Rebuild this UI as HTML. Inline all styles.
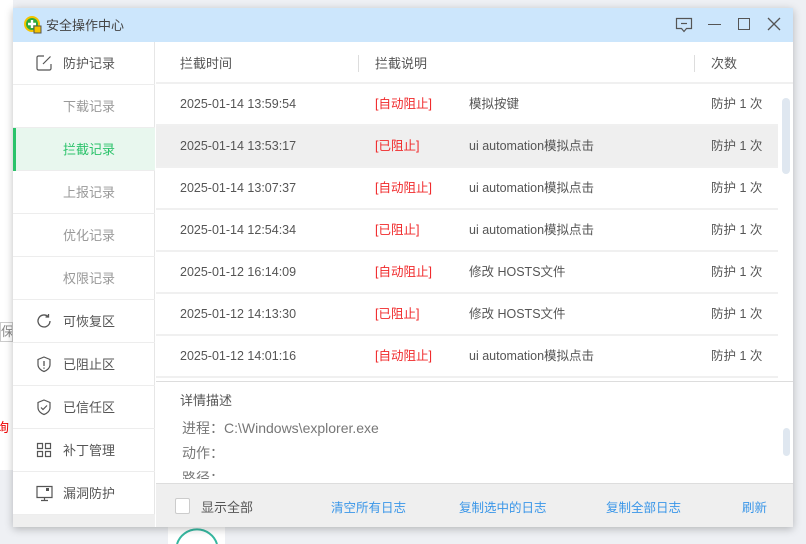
<!DOCTYPE html>
<html style="width:806px;height:544px;overflow:hidden"><head><meta charset="utf-8"><style>
*{margin:0;padding:0;box-sizing:border-box}
body{width:806px;height:544px;background:#eef0f4;font-family:"Liberation Sans","Noto Sans CJK SC",sans-serif;position:relative;overflow:hidden;font-size:13px;color:#555}
.abs{position:absolute}
.win{left:13px;top:8px;width:780px;height:519px;background:#fff;box-shadow:0 2px 8px rgba(0,0,0,.25)}
.title{left:0;top:0;width:780px;height:34px;background:#cce6fc}
.side{left:0;top:34px;width:142px;height:485px;background:#fff;border-right:1px solid #e6e6e6}
.it{position:absolute;left:0;width:142px;height:43px;border-bottom:1px solid #ededed;font-size:13px;line-height:43px}
.it span{position:absolute;left:50px}
.it svg{position:absolute;left:23px;top:13px}
.sub span{color:#999}
.row{position:absolute;left:143px;width:622px;height:42px;border-bottom:2px solid #f0f0f0;line-height:40px;font-size:12.5px;color:#555}
.row span{position:absolute}
.red{color:#f0282a}
.link{position:absolute;color:#3a96e8;font-size:12.5px}
</style></head><body>
<div class="abs" style="left:0;top:0;width:13px;height:470px;background:#fff"></div>
<div class="abs" style="left:0;top:322px;font-size:13px;color:#888;width:13px;overflow:hidden;border:1px solid #ccc;height:20px;line-height:18px">保</div>
<div class="abs" style="left:0;top:417px;width:13px;overflow:hidden;height:20px"><span style="position:absolute;left:-4px;font-size:13px;color:#e00">询</span></div>
<svg class="abs" style="left:168px;top:527px" width="57" height="17" viewBox="0 0 57 17"><rect width="57" height="17" fill="#fff"/><path d="M9 17A21 21 0 0 1 49 17" fill="none" stroke="#36b8a0" stroke-width="2"/></svg>
<div class="abs win">
 <div class="abs title">
  <svg class="abs" style="left:10px;top:7px" width="20" height="20" viewBox="0 0 20 20"><circle cx="9" cy="9" r="8" fill="#f4c400"/><circle cx="9" cy="9" r="6" fill="#2eaa3c"/><path d="M9 5v8M5 9h8" stroke="#fff" stroke-width="2.4"/><rect x="11" y="11" width="7" height="7" fill="#f4c400" stroke="#555" stroke-width="1"/></svg>
  <div class="abs" style="left:33px;top:7px;font-size:13px;color:#444">安全操作中心</div>
  <svg class="abs" style="left:662px;top:9px" width="18" height="16" viewBox="0 0 18 16"><path d="M1.5 1.5h15v10h-5l-2.5 3-2.5-3h-5z" fill="none" stroke="#555" stroke-width="1.2"/><path d="M6 6.5h6" stroke="#555" stroke-width="1.2"/></svg>
  <div class="abs" style="left:695px;top:16px;width:13px;height:1.3px;background:#555"></div>
  <div class="abs" style="left:725px;top:10px;width:12px;height:12px;border:1.3px solid #555"></div>
  <svg class="abs" style="left:754px;top:9px" width="14" height="14" viewBox="0 0 14 14"><path d="M1 1l12 12M13 1L1 13" stroke="#555" stroke-width="1.3"/></svg>
 </div>
 <div class="abs side">
  <div class="it" style="top:0"><svg width="16" height="16" viewBox="0 0 16 16"><path d="M8 1H2.5a1.5 1.5 0 0 0-1.5 1.5v11a1.5 1.5 0 0 0 1.5 1.5h11a1.5 1.5 0 0 0 1.5-1.5V9M14.5 1.5L7 9" fill="none" stroke="#555" stroke-width="1.2"/></svg><span>防护记录</span></div>
  <div class="it sub" style="top:43px"><span>下载记录</span></div>
  <div class="it" style="top:86px;background:#e8f7ee"><div class="abs" style="left:0;top:0;width:3px;height:43px;background:#2cc36b"></div><span style="color:#2cc36b">拦截记录</span></div>
  <div class="it sub" style="top:129px"><span>上报记录</span></div>
  <div class="it sub" style="top:172px"><span>优化记录</span></div>
  <div class="it sub" style="top:215px"><span>权限记录</span></div>
  <div class="it" style="top:258px"><svg width="16" height="16" viewBox="0 0 16 16"><path d="M14 8a6 6 0 1 1-2-4.5M12.5 1v3h-3" fill="none" stroke="#555" stroke-width="1.3"/></svg><span>可恢复区</span></div>
  <div class="it" style="top:301px"><svg width="16" height="17" viewBox="0 0 16 17"><path d="M8 1l6 2.5v5c0 3.5-3 6-6 7-3-1-6-3.5-6-7v-5z" fill="none" stroke="#555" stroke-width="1.2"/><path d="M8 5v5M8 11.5v1.2" stroke="#555" stroke-width="1.3"/></svg><span>已阻止区</span></div>
  <div class="it" style="top:344px"><svg width="16" height="17" viewBox="0 0 16 17"><path d="M8 1l6 2.5v5c0 3.5-3 6-6 7-3-1-6-3.5-6-7v-5z" fill="none" stroke="#555" stroke-width="1.2"/><path d="M5 8.5l2 2 4-4" fill="none" stroke="#555" stroke-width="1.2"/></svg><span>已信任区</span></div>
  <div class="it" style="top:387px"><svg width="16" height="16" viewBox="0 0 16 16"><path d="M1.5 1.5h5v5h-5zM9.5 1.5h5v5h-5zM1.5 9.5h5v5h-5zM9.5 9.5h5v5h-5z" fill="none" stroke="#555" stroke-width="1.2"/></svg><span>补丁管理</span></div>
  <div class="it" style="top:430px"><svg width="17" height="17" viewBox="0 0 17 17"><path d="M1 1.5h15v11H1zM5 15.5h7M8.5 12.5v3" fill="none" stroke="#555" stroke-width="1.2"/><rect x="10" y="3" width="3" height="3" fill="#555"/></svg><span>漏洞防护</span></div>
  <div class="abs" style="left:0;top:473px;width:142px;height:12px;background:#efefef"></div>
 </div>
 <div class="abs" style="left:143px;top:34px;width:637px;height:42px;border-bottom:2px solid #f0f0f0"></div>
 <div class="abs" style="left:167px;top:45px">拦截时间</div>
 <div class="abs" style="left:345px;top:47px;width:1px;height:17px;background:#ddd"></div>
 <div class="abs" style="left:362px;top:45px">拦截说明</div>
 <div class="abs" style="left:681px;top:47px;width:1px;height:17px;background:#ddd"></div>
 <div class="abs" style="left:698px;top:45px">次数</div>

 <div class="row" style="top:76px"><span style="left:24px">2025-01-14 13:59:54</span><span class="red" style="left:219px">[自动阻止]</span><span style="left:313px">模拟按键</span><span style="left:555px">防护 1 次</span></div>
 <div class="row" style="top:118px;background:#efefef"><span style="left:24px">2025-01-14 13:53:17</span><span class="red" style="left:219px">[已阻止]</span><span style="left:313px">ui automation模拟点击</span><span style="left:555px">防护 1 次</span></div>
 <div class="row" style="top:160px"><span style="left:24px">2025-01-14 13:07:37</span><span class="red" style="left:219px">[自动阻止]</span><span style="left:313px">ui automation模拟点击</span><span style="left:555px">防护 1 次</span></div>
 <div class="row" style="top:202px"><span style="left:24px">2025-01-14 12:54:34</span><span class="red" style="left:219px">[已阻止]</span><span style="left:313px">ui automation模拟点击</span><span style="left:555px">防护 1 次</span></div>
 <div class="row" style="top:244px"><span style="left:24px">2025-01-12 16:14:09</span><span class="red" style="left:219px">[自动阻止]</span><span style="left:313px">修改 HOSTS文件</span><span style="left:555px">防护 1 次</span></div>
 <div class="row" style="top:286px"><span style="left:24px">2025-01-12 14:13:30</span><span class="red" style="left:219px">[已阻止]</span><span style="left:313px">修改 HOSTS文件</span><span style="left:555px">防护 1 次</span></div>
 <div class="row" style="top:328px"><span style="left:24px">2025-01-12 14:01:16</span><span class="red" style="left:219px">[自动阻止]</span><span style="left:313px">ui automation模拟点击</span><span style="left:555px">防护 1 次</span></div>
 <div class="abs" style="left:769px;top:90px;width:8px;height:76px;background:#dfe7f0;border-radius:4px"></div>
 <div class="abs" style="left:143px;top:373px;width:637px;height:1px;background:#ddd"></div>
 <div class="abs" style="left:167px;top:382px">详情描述</div>
 <div class="abs" style="left:169px;top:410px;color:#777;font-size:14px">进程：C:\Windows\explorer.exe</div>
 <div class="abs" style="left:169px;top:435px;color:#777;font-size:14px">动作：</div>
 <div class="abs" style="left:169px;top:460px;color:#777;font-size:14px;height:11px;overflow:hidden">路径：</div>
 <div class="abs" style="left:770px;top:420px;width:7px;height:28px;background:#dfe7f0;border-radius:4px"></div>
 <div class="abs" style="left:143px;top:475px;width:637px;height:44px;background:#efefef;border-top:1px solid #ddd"></div>
 <div class="abs" style="left:162px;top:490px;width:15px;height:16px;border:1px solid #ccc;background:#fff;border-radius:2px"></div>
 <div class="abs" style="left:188px;top:489px;color:#555">显示全部</div>
 <div class="link" style="left:318px;top:489px">清空所有日志</div>
 <div class="link" style="left:446px;top:489px">复制选中的日志</div>
 <div class="link" style="left:593px;top:489px">复制全部日志</div>
 <div class="link" style="left:729px;top:489px">刷新</div>
</div>
</body></html>
